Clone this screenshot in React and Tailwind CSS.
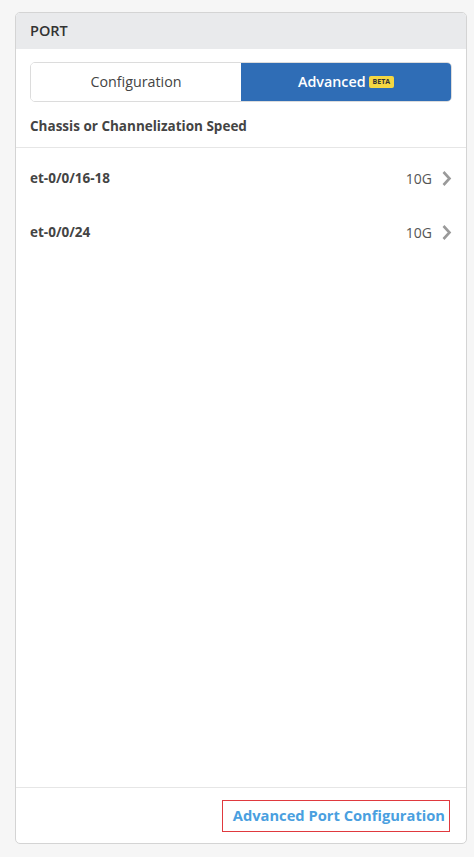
import React, { useState } from 'react';

const rows = [
  { name: 'et-0/0/16-18', speed: '10G' },
  { name: 'et-0/0/24', speed: '10G' },
];

function Chevron() {
  return (
    <svg width="11" height="17" viewBox="0 0 11 17" className="ml-[9px]">
      <path d="M2.5 2 L8.5 8.5 L2.5 15" fill="none" stroke="#9a9a9a" strokeWidth="2.6" />
    </svg>
  );
}

export default function App() {
  const [tab, setTab] = useState('advanced');

  return (
    <div
      className="h-[857px] w-[474px] bg-[#f6f6f6] pt-[12px] pl-[15px] pr-[7px] pb-[13px]"
      style={{ fontFamily: '"Open Sans", "Liberation Sans", sans-serif' }}
    >
      <div className="flex h-full flex-col overflow-hidden rounded-[5px] border border-[#d4d4d4] bg-white">
        <div className="flex h-[36px] items-center bg-[#e9eaec] px-[14px] text-[14.5px] font-semibold text-[#333]">
          PORT
        </div>

        <div className="px-[14px] pt-[13px]">
          <div className="flex h-[40px] overflow-hidden rounded-[5px] border border-[#dcdcdc]">
            <button
              onClick={() => setTab('config')}
              className={
                tab === 'config'
                  ? 'flex-1 bg-[#2f6db6] text-[14.3px] font-semibold text-white'
                  : 'flex-1 bg-white text-[14.3px] text-[#444]'
              }
            >
              Configuration
            </button>
            <button
              onClick={() => setTab('advanced')}
              className={
                tab === 'advanced'
                  ? 'flex flex-1 items-center justify-center bg-[#2f6db6] text-[14.3px] font-semibold text-white'
                  : 'flex flex-1 items-center justify-center bg-white text-[14.3px] text-[#444]'
              }
            >
              Advanced
              <span className="ml-[3px] flex h-[12px] items-center rounded-[2px] bg-[#f5d742] px-[4px] text-[7px] font-bold text-[#333]">
                BETA
              </span>
            </button>
          </div>
          <div className="pt-[14px] pb-[11px] text-[13.5px] font-bold text-[#444]">
            Chassis or Channelization Speed
          </div>
        </div>

        <div className="border-t border-[#e6e6e6] pt-[3px]">
          {rows.map((r) => (
            <div key={r.name} className="flex h-[54px] items-center justify-between pl-[14px] pr-[14px]">
              <span className="text-[13.5px] font-bold text-[#444]">{r.name}</span>
              <span className="flex items-center text-[14px] text-[#555]">
                {r.speed}
                <Chevron />
              </span>
            </div>
          ))}
        </div>

        <div className="flex-1" />

        <div className="flex h-[56px] items-center justify-end border-t border-[#e6e6e6] pr-[16px]">
          <a
            href="#"
            className="flex h-[32px] items-center border border-[#e0393e] pl-[10px] pr-[4px] text-[14.7px] font-bold text-[#4a9fe0]"
          >
            Advanced Port Configuration
          </a>
        </div>
      </div>
    </div>
  );
}
